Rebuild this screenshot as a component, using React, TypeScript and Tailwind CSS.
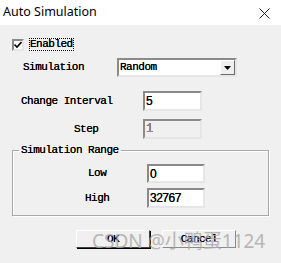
import { ReactNode } from 'react';

const dlg = { fontFamily: '"Liberation Mono", "Noto Sans CJK SC", monospace' };
const sans = { fontFamily: '"Liberation Sans", Arial, sans-serif' };

function Field({ value, disabled, w = 'w-[59px]', h = 'h-[20px]' }: { value: string; disabled?: boolean; w?: string; h?: string }) {
  return (
    <div
      className={`${w} ${h} border-2 border-t-[#8a8a8a] border-l-[#8a8a8a] border-b-[#e6e6e6] border-r-[#e6e6e6] flex items-center pl-[1px] text-[12px] leading-none ${
        disabled ? 'bg-[#f0f0f0] text-[#8d8d8d]' : 'bg-white text-black'
      }`}
      style={disabled ? dlg : sans}
    >
      {value}
    </div>
  );
}

function Row({ children, className = '' }: { children: ReactNode; className?: string }) {
  return <div className={`flex items-center ${className}`}>{children}</div>;
}

export default function App() {
  return (
    <div className="w-[281px] h-[263px] bg-[#f0f0f0] overflow-hidden select-none">
      {/* title bar */}
      <div className="h-[25px] bg-white flex items-center justify-between pl-[3px] pr-[11px]">
        <span className="text-[12.5px] text-black" style={{ fontFamily: '"Noto Sans", sans-serif' }}>
          Auto Simulation
        </span>
        <svg width="11" height="11" viewBox="0 0 11 11" className="mt-[1px]">
          <path d="M0.5 0.5 L10.5 10.5 M10.5 0.5 L0.5 10.5" stroke="#222" strokeWidth="1" />
        </svg>
      </div>

      <div className="relative text-[11px] text-black tracking-[-0.5px] [text-shadow:0_0_0.4px_#000]" style={dlg}>
        {/* enabled */}
        <Row className="pt-[13px] pl-[12px]">
          <div className="w-[12px] h-[12px] bg-white border-2 border-t-[#8a8a8a] border-l-[#8a8a8a] border-b-[#e6e6e6] border-r-[#e6e6e6] flex items-center justify-center">
            <svg width="8" height="8" viewBox="0 0 8 8">
              <path d="M0.5 3.5 L3 6 L7.5 1" stroke="#000" strokeWidth="1.6" fill="none" />
            </svg>
          </div>
          <span className="ml-[5px] px-[1px] h-[13px] leading-[12px] outline outline-1 outline-dotted outline-black -outline-offset-1">
            Enabled
          </span>
        </Row>

        {/* simulation */}
        <Row className="mt-[7px]">
          <span className="pl-[23px] w-[117px]">Simulation</span>
          <div className="w-[120px] h-[19px] bg-white border-2 border-t-[#8a8a8a] border-l-[#8a8a8a] border-b-[#e6e6e6] border-r-[#e6e6e6] flex items-center justify-between">
            <span className="pl-[1px]">Random</span>
            <div className="w-[15px] h-[15px] bg-[#f0f0f0] border border-t-white border-l-white border-b-[#6a6a6a] border-r-[#6a6a6a] flex items-center justify-center">
              <svg width="7" height="4" viewBox="0 0 7 4">
                <path d="M0 0 H7 L3.5 4 Z" fill="#000" />
              </svg>
            </div>
          </div>
        </Row>

        {/* change interval */}
        <Row className="mt-[14px]">
          <span className="pl-[21px] w-[143px]">Change Interval</span>
          <Field value="5" />
        </Row>

        {/* step */}
        <Row className="mt-[8px]">
          <span className="pl-[74px] w-[143px]">Step</span>
          <Field value="1" disabled />
        </Row>

        {/* range group */}
        <fieldset className="mt-[5px] ml-[12px] w-[257px] h-[72px] border border-[#a9a9a9] shadow-[inset_1px_1px_0_#fff,1px_1px_0_#fff] px-0">
          <legend className="ml-[6px] px-[2px] leading-[12px]">Simulation Range</legend>
          <Row className="mt-[8px]">
            <span className="pl-[75px] w-[134px]">Low</span>
            <Field value="0" w="w-[58px]" h="h-[19px]" />
          </Row>
          <Row className="mt-[5px]">
            <span className="pl-[72px] w-[134px]">High</span>
            <Field value="32767" w="w-[58px]" />
          </Row>
        </fieldset>

        {/* buttons */}
        <Row className="mt-[14px] pl-[76px] gap-[12px]">
          <div className="w-[74px] h-[18px] bg-[#f0f0f0] border border-t-white border-l-white border-b-[#404040] border-r-[#404040] shadow-[1px_1px_0_#000] flex items-center justify-center">
            OK
          </div>
          <div className="w-[74px] h-[18px] bg-[#f0f0f0] border border-t-white border-l-white border-b-[#8a8a8a] border-r-[#8a8a8a] flex items-center justify-center">
            Cancel
          </div>
        </Row>

        {/* watermark */}
        <div
          className="absolute left-[92px] top-[202px] text-[19px] tracking-normal text-[#a8a8a8] opacity-80 pointer-events-none [text-shadow:none]"
          style={{ fontFamily: '"Noto Sans", "Noto Sans CJK SC", sans-serif' }}
        >
          CSDN @小鸭蛋1124
        </div>
      </div>
    </div>
  );
}
